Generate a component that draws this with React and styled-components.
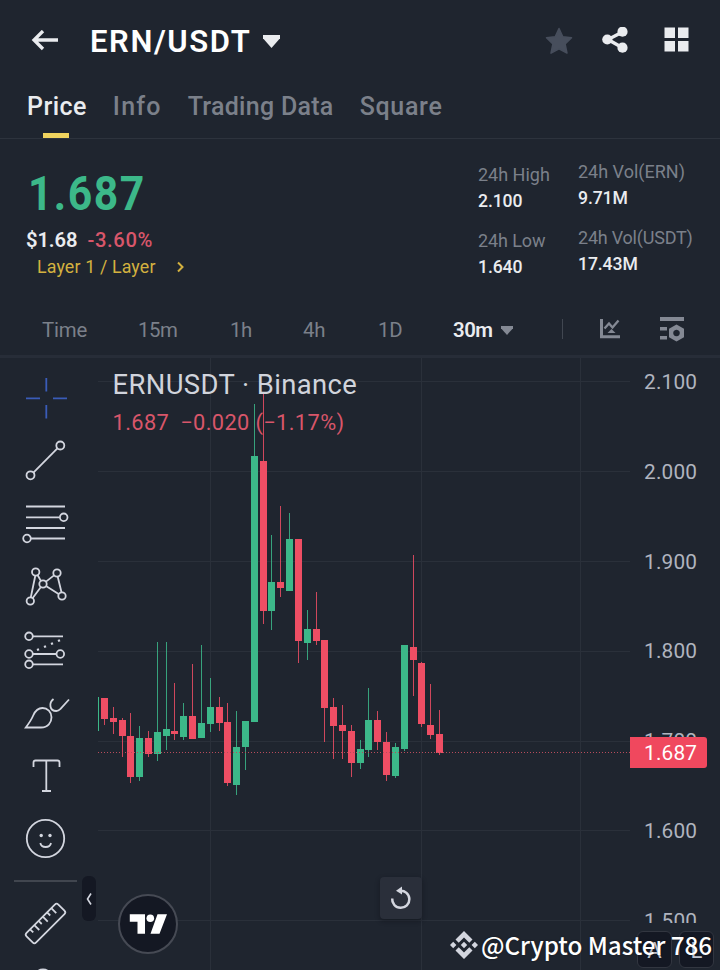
import React from "react";
import styled, { createGlobalStyle } from "styled-components";

const c = {
  bg: "#1f252f",
  line: "#2d333d",
  grid: "#2a303a",
  text: "#eaecef",
  muted: "#848994",
  dim: "#7b808a",
  green: "#3cb889",
  red: "#ee4e64",
  softRed: "#d8566a",
  yellow: "#f0d35e",
  gold: "#d3b13f",
  icon: "#d3d6df",
  dark: "#141823",
};

const Global = createGlobalStyle`
  body { margin: 0; background: ${c.bg}; }
  * { box-sizing: border-box; }
  svg { display: block; flex: none; }
`;

const Screen = styled.div`
  position: relative;
  width: 720px;
  height: 970px;
  overflow: hidden;
  display: flex;
  flex-direction: column;
  background: ${c.bg};
  color: ${c.text};
  font-family: Roboto, "Noto Sans", sans-serif;
  white-space: nowrap;
`;

const Header = styled.header`
  height: 82px;
  padding: 0 29px 0 31px;
  display: flex;
  align-items: center;
`;
const Title = styled.h1`
  margin: 0 12px 0 31px;
  padding-top: 2px;
  font-size: 31px;
  line-height: 40px;
  font-weight: 600;
  letter-spacing: 1.6px;
  color: #fff;
`;
const Actions = styled.div`
  margin-left: auto;
  display: flex;
  align-items: center;
  gap: 28px;
`;

const Tabs = styled.nav`
  height: 57px;
  padding-left: 27px;
  display: flex;
  gap: 26px;
  border-bottom: 1px solid ${c.line};
`;
const Tab = styled.a`
  display: flex;
  flex-direction: column;
  align-items: center;
  justify-content: space-between;
  padding-top: 9px;
  font-size: 25px;
  line-height: 32px;
  font-weight: 500;
  letter-spacing: ${(p) => p.$spacing}px;
  color: ${(p) => (p.$active ? c.text : c.dim)};
  &::after {
    content: "";
    width: 26px;
    height: 5px;
    margin-right: 2px;
    background: ${(p) => (p.$active ? c.yellow : "transparent")};
  }
`;

const Summary = styled.section`
  height: 164px;
  padding: 23px 0 0 27px;
  display: flex;
`;
const PriceBlock = styled.div`
  width: 451px;
`;
const LastPrice = styled.div`
  padding: 2px 0 0 1px;
  font-size: 48.5px;
  line-height: 60px;
  font-weight: 700;
  letter-spacing: 1.7px;
  transform: scaleX(0.88);
  transform-origin: left;
  color: ${c.green};
`;
const ChangeRow = styled.div`
  margin-top: 3px;
  display: flex;
  gap: 10px;
  font-size: 20.2px;
  line-height: 26px;
`;
const Fiat = styled.span`
  margin-left: -1px;
  font-weight: 600;
  letter-spacing: -0.1px;
`;
const Change = styled.span`
  font-weight: 500;
  letter-spacing: 0.65px;
  color: ${c.softRed};
`;
const Category = styled.a`
  margin-top: 1px;
  padding-left: 10px;
  display: flex;
  align-items: center;
  gap: 20px;
  font-size: 17.8px;
  line-height: 26px;
  letter-spacing: 0.15px;
  color: ${c.gold};
`;
const StatColumn = styled.div`
  width: 100px;
  margin-top: ${(p) => (p.$raised ? -3 : 0)}px;
`;
const Stat = styled.dl`
  margin: 0 0 14px;
  line-height: 26px;
`;
const StatName = styled.dt`
  font-size: 18px;
  letter-spacing: ${(p) => p.$spacing}px;
  color: ${c.dim};
`;
const StatValue = styled.dd`
  margin: 0;
  font-size: 17.6px;
  font-weight: 500;
  letter-spacing: -0.1px;
`;

const Intervals = styled.div`
  height: 52px;
  padding-left: 42px;
  display: grid;
  grid-template-columns: 96px 92px 73px 75px 75px 109px 38px 60px 30px;
  align-items: center;
`;
const Interval = styled.button`
  border: 0;
  padding: 2px 0 0;
  background: none;
  display: flex;
  align-items: center;
  gap: 8px;
  font: ${(p) => (p.$active ? 600 : 400)} 20.4px/28px Roboto, sans-serif;
  letter-spacing: ${(p) => p.$spacing}px;
  color: ${(p) => (p.$active ? c.text : c.dim)};
`;
const Rule = styled.span`
  width: 1px;
  height: 20px;
  background: #414751;
`;

const ChartArea = styled.main`
  position: relative;
  flex: 1;
  min-height: 0;
  overflow: hidden;
  display: grid;
  grid-template-columns: 97px 533px 90px;
  border-top: 3px solid #272d38;
`;
const Toolbar = styled.aside`
  padding-top: 8.5px;
`;
const Tool = styled.button`
  height: 63px;
  width: 97px;
  padding: 0 0 0 22px;
  border: 0;
  background: none;
  display: flex;
  align-items: center;
`;
const ToolDivider = styled.div`
  height: 2px;
  width: 63px;
  margin: 9px 0 10px 14px;
  background: #41464f;
`;
const Collapse = styled.button`
  position: absolute;
  left: 82px;
  top: 518px;
  width: 14px;
  height: 45px;
  padding: 0;
  border: 0;
  border-radius: 6px;
  background: ${c.dark};
  display: grid;
  place-items: center;
`;
const Legend = styled.div`
  position: absolute;
  left: 112.5px;
  top: 9px;
`;
const Symbol = styled.div`
  font-size: 27.4px;
  line-height: 36px;
  letter-spacing: 0.4px;
  color: #d1d4dc;
`;
const Quote = styled.div`
  margin-top: 3px;
  display: flex;
  gap: 11px;
  font-size: 21.8px;
  line-height: 34px;
  letter-spacing: 0.38px;
  color: ${c.softRed};
`;
const Axis = styled.div`
  height: 565px;
  overflow: hidden;
  padding: 12px 0 0 14px;
  display: flex;
  flex-direction: column;
  gap: 65.8px;
  font-size: 20.8px;
  letter-spacing: 0.2px;
  color: #b0b4bf;
`;
const AxisLabel = styled.span`
  flex: none;
  line-height: 24px;
`;
const PriceTag = styled.div`
  position: absolute;
  left: 630px;
  top: 379px;
  width: 77px;
  height: 31px;
  padding: 1px 0 0 14px;
  border-radius: 0 3px 3px 0;
  background: #f0485e;
  color: #fff;
  font-size: 20.8px;
  line-height: 31px;
  letter-spacing: 0.2px;
`;
const TradingView = styled.div`
  position: absolute;
  left: 118px;
  top: 536px;
  width: 60px;
  height: 60px;
  border: 2px solid #464a54;
  border-radius: 50%;
  background: ${c.dark};
  display: grid;
  place-items: center;
`;
const Reset = styled.button`
  position: absolute;
  left: 380px;
  top: 519px;
  width: 42px;
  height: 42px;
  padding: 0;
  border: 0;
  border-radius: 4px;
  background: #2a2f3a;
  box-shadow: 0 2px 5px rgba(10, 13, 20, 0.45);
  display: grid;
  place-items: center;
`;
const ScaleButtons = styled.div`
  position: absolute;
  left: 637px;
  top: 573px;
  display: flex;
  gap: 7px;
`;
const ScaleButton = styled.button`
  width: 35px;
  height: 37px;
  padding: 2px 0 0;
  border: 1px solid #323640;
  border-radius: 6px;
  background: ${c.dark};
  color: #c3c6d0;
  font: 400 22px/30px Roboto, sans-serif;
`;
const Watermark = styled.div`
  position: absolute;
  left: 450px;
  top: 926px;
  display: flex;
  align-items: center;
  gap: 3px;
  height: 37px;
  color: #fff;
  font: 500 24.2px/37px "Noto Sans CJK SC", sans-serif;
  letter-spacing: -0.02px;
  text-shadow: 0 0 2px rgba(0, 0, 0, 0.4);
`;

// left edge of body, direction, high, body top, body bottom, low
const candles = [
  [101, "r", 698, 698, 719, 725],
  [110, "r", 707, 718, 722, 734],
  [119, "r", 718, 720, 736, 757],
  [127, "r", 713, 736, 777, 783],
  [136, "g", 726, 738, 777, 781],
  [145, "r", 731, 738, 754, 757],
  [154, "g", 642, 732, 754, 761],
  [163, "g", 642, 729, 736, 750],
  [171, "r", 683, 731, 734, 740],
  [180, "g", 703, 716, 737, 740],
  [189, "r", 664, 716, 739, 739],
  [198, "g", 645, 723, 738, 738],
  [207, "g", 678, 707, 724, 732],
  [216, "r", 697, 707, 723, 731],
  [224, "r", 703, 722, 783, 786],
  [233, "g", 711, 747, 785, 795],
  [242, "g", 721, 721, 747, 770],
  [251, "g", 404, 456, 722, 722],
  [260, "r", 394, 461, 611, 624],
  [268, "g", 535, 582, 611, 630],
  [277, "r", 506, 582, 588, 597],
  [286, "g", 513, 539, 591, 591],
  [295, "r", 539, 539, 641, 663],
  [304, "g", 610, 629, 643, 660],
  [313, "r", 592, 629, 641, 645],
  [321, "r", 640, 640, 708, 742],
  [330, "r", 698, 707, 726, 759],
  [339, "r", 705, 725, 731, 759],
  [348, "r", 725, 731, 763, 777],
  [357, "g", 740, 749, 763, 769],
  [365, "g", 688, 720, 750, 757],
  [374, "r", 711, 720, 742, 750],
  [383, "r", 732, 742, 775, 781],
  [392, "g", 743, 747, 776, 778],
  [401, "g", 645, 645, 749, 751],
  [410, "r", 555, 647, 660, 696],
  [418, "r", 662, 663, 724, 727],
  [427, "r", 684, 725, 735, 739],
  [436, "r", 710, 734, 753, 755],
];

const Candles = () => (
  <svg width="533" height="612" viewBox="97 358 533 612" shapeRendering="crispEdges">
    {[381, 471, 561, 651, 741, 830, 920].map((y) => (
      <rect key={y} x="98" y={y} width="532" height="1" fill={c.grid} />
    ))}
    {[210, 421, 580].map((x) => (
      <rect key={x} x={x} y="358" width="1" height="612" fill={c.grid} />
    ))}
    <rect x="98" y="697" width="1" height="34" fill={c.green} />
    {candles.map(([x, dir, high, top, bottom, low]) => {
      const fill = dir === "g" ? c.green : c.red;
      return (
        <g key={x} fill={fill}>
          <rect x={x + 3} y={high} width="1" height={low - high} fillOpacity="0.85" />
          <rect x={x} y={top} width="7" height={bottom - top} />
        </g>
      );
    })}
    <path d="M98 752.5H630" stroke="#b84c5c" strokeDasharray="1 2" />
  </svg>
);

const toolIcons = {
  cross: <path d="M24.3 4v13.5M24.3 31v13.5M4 24.3h14M31 24.3h14" stroke="#3a5cb8" />,
  trend: (
    <>
      <path d="M35.4 11.4 11.4 35.6" />
      <circle cx="38.3" cy="8.5" r="4" />
      <circle cx="8.5" cy="38.3" r="4" />
    </>
  ),
  fib: (
    <>
      <path d="M4 6.5h39M4 17.3h33.5M4 28h39M9 38.5h34" />
      <circle cx="41.7" cy="17.3" r="3.8" />
      <circle cx="5" cy="38.5" r="3.8" />
    </>
  ),
  pattern: (
    <>
      <path d="M13.3 12.8 8.8 34.2M15.7 12.3 18.9 17.9M24 18.6 32 12.4M35.7 13.7 39.5 29.2M24.4 23.2 36.6 31M18.7 24.2 10.7 35" />
      <circle cx="13.7" cy="9" r="3.7" />
      <circle cx="35" cy="10" r="3.7" />
      <circle cx="21" cy="21" r="3.7" />
      <circle cx="40" cy="33" r="3.7" />
      <circle cx="8.3" cy="38" r="3.7" />
    </>
  ),
  forecast: (
    <>
      <path d="M11 10.3h30M11 28h23.5M11 38.3h30" />
      <circle cx="7" cy="10.3" r="3.8" />
      <circle cx="7" cy="28" r="3.8" />
      <circle cx="7" cy="38.3" r="3.8" />
      <circle cx="38.3" cy="28" r="3.8" />
      <path d="M15 24 38.5 14" strokeDasharray="2.2 5.4" strokeWidth="2.2" />
    </>
  ),
  brush: (
    <>
      <path d="M3.8 38.5H19c7 0 10.5-5 10.5-10.3S25.5 19 20.5 19C15 19 13 22.3 11.2 26.5 9.3 31 6.8 34.5 3.8 38.5z" />
      <path d="M31.5 10C26.5 14 27.5 22 34.3 22c1.7 0 3-1 4.2-2.2L47 10.5" />
    </>
  ),
  text: <path d="M11.5 15V10.5q0-2 2-2h22q2 0 2 2V15M24.3 8.5V39M20 39h9" />,
  smile: (
    <>
      <circle cx="23.5" cy="23.5" r="18.7" />
      <path d="M18.3 28c1 5.3 9.700 5.300 10.700 0" />
      <circle cx="19.2" cy="20.5" r="1.7" fill={c.icon} stroke="none" />
      <circle cx="28" cy="20.5" r="1.7" fill={c.icon} stroke="none" />
    </>
  ),
  ruler: (
    <g transform="translate(23.5 24.5) rotate(-45)">
      <rect x="-22.5" y="-6.8" width="45" height="13.6" rx="2.5" />
      <path d="M-15-6.8v4.5M-9-6.8v7M-3-6.8v4.5M3-6.8v7M9-6.8v4.5M15-6.8v7" />
    </g>
  ),
  lens: <circle cx="21" cy="16.5" r="9" />,
};

const ToolButton = ({ name }) => (
  <Tool aria-label={name}>
    <svg width="48" height="48" fill="none" stroke={c.icon} strokeWidth="1.8" overflow="visible">
      {toolIcons[name]}
    </svg>
  </Tool>
);

const Caret = ({ w, h, fill }) => (
  <svg width={w} height={h} viewBox="0 0 16 13" preserveAspectRatio="none">
    <path d="M0 0h16v3.2L8 13 0 3.2z" fill={fill} />
  </svg>
);

const StatItem = ({ name, value, spacing }) => (
  <Stat>
    <StatName $spacing={spacing}>{name}</StatName>
    <StatValue>{value}</StatValue>
  </Stat>
);

const intervals = [
  ["Time", -0.15],
  ["15m", -0.4],
  ["1h", -0.4],
  ["4h", -0.2],
  ["1D", -0.2],
];

export default function App() {
  return (
    <Screen>
      <Global />
      <Header>
        <svg width="28" height="22" viewBox="0 0 28 22" fill="none" stroke={c.text} strokeWidth="3.3">
          <path d="M2.5 10H27M12 1l-9 9 9 9" />
        </svg>
        <Title>ERN/USDT</Title>
        <Caret w={17} h={13} fill={c.text} />
        <Actions>
          <svg width="28" height="28" viewBox="0 0 28 28">
            <path
              d="M14 1.5l3.8 8.3 8.7 1-6.4 6.2 1.9 9.1L14 21.8l-8 4.3L7.9 17 1.5 10.8l8.7-1z"
              fill="#474e5c"
              stroke="#474e5c"
              strokeWidth="1.5"
              strokeLinejoin="round"
            />
          </svg>
          <svg width="28" height="28" viewBox="0 0 28 28" fill={c.text}>
            <path d="M21.5 5 7 12.5l14.5 8.2" fill="none" stroke={c.text} strokeWidth="3.4" />
            <circle cx="21.5" cy="4.7" r="5.1" />
            <circle cx="6.3" cy="12.5" r="5.1" />
            <circle cx="21.5" cy="20.7" r="5.1" />
          </svg>
          <svg width="34" height="28" viewBox="0 0 34 28" fill={c.text}>
            <path d="M7.5.5H18V11H7.500zM21 .5h10.500V11H21zM7.500 14H18v10.500H7.500zM21 14h10.500v10.500H21z" />
          </svg>
        </Actions>
      </Header>
      <Tabs>
        <Tab $active $spacing={0.45}>Price</Tab>
        <Tab $spacing={1.2}>Info</Tab>
        <Tab $spacing={0.28}>Trading Data</Tab>
        <Tab $spacing={0.7}>Square</Tab>
      </Tabs>
      <Summary>
        <PriceBlock>
          <LastPrice>1.687</LastPrice>
          <ChangeRow>
            <Fiat>$1.68</Fiat>
            <Change>-3.60%</Change>
          </ChangeRow>
          <Category>
            Layer 1 / Layer
            <svg width="9" height="12" viewBox="0 0 9 12" fill="none" stroke={c.gold} strokeWidth="2">
              <path d="M2 1.5 6.5 6 2 10.5" />
            </svg>
          </Category>
        </PriceBlock>
        <StatColumn>
          <StatItem name="24h High" value="2.100" spacing={0} />
          <StatItem name="24h Low" value="1.640" spacing={-0.1} />
        </StatColumn>
        <StatColumn $raised>
          <StatItem name="24h Vol(ERN)" value="9.71M" spacing={0} />
          <StatItem name="24h Vol(USDT)" value="17.43M" spacing={-0.22} />
        </StatColumn>
      </Summary>
      <Intervals>
        {intervals.map(([label, spacing]) => (
          <Interval key={label} $spacing={spacing}>
            {label}
          </Interval>
        ))}
        <Interval $active $spacing={-0.5}>
          30m
          <Caret w={12} h={9} fill={c.muted} />
        </Interval>
        <Rule />
        <svg width="20" height="20" viewBox="0 0 20 20" fill="none" stroke={c.muted}>
          <path d="M1.5 0v17.7H20" strokeWidth="3" />
          <path d="M4.5 9.5 9 4.5l3.5 4L18.5 1.5" strokeWidth="2.3" />
          <path d="M7.5 14h8l-4-4z" fill={c.muted} stroke="none" />
        </svg>
        <svg width="25" height="26" viewBox="0 0 25 26" fill={c.muted}>
          <path d="M0 1h24v4H0zM0 11h7v3.5H0zM0 20h7v3.5H0z" />
          <path
            fillRule="evenodd"
            d="M16.5 8.5 24 12.7v8.6l-7.5 4.2L9 21.300v-8.600zM16.500 13.700a3.300 3.300 0 1 0 .01 0z"
          />
        </svg>
      </Intervals>
      <ChartArea>
        <Toolbar>
          {["cross", "trend", "fib", "pattern", "forecast", "brush", "text", "smile"].map((n) => (
            <ToolButton key={n} name={n} />
          ))}
          <ToolDivider />
          <ToolButton name="ruler" />
          <ToolButton name="lens" />
        </Toolbar>
        <Candles />
        <Axis>
          {["2.100", "2.000", "1.900", "1.800", "1.700", "1.600", "1.500"].map((v) => (
            <AxisLabel key={v}>{v}</AxisLabel>
          ))}
        </Axis>
        <Legend>
          <Symbol>ERNUSDT · Binance</Symbol>
          <Quote>
            <span>1.687</span>
            <span>−0.020 (−1.17%)</span>
          </Quote>
        </Legend>
        <PriceTag>1.687</PriceTag>
        <Collapse aria-label="Collapse">
          <svg width="6" height="14" viewBox="0 0 6 14" fill="none" stroke={c.icon} strokeWidth="1.6">
            <path d="M5 1.5 1.5 7 5 12.5" />
          </svg>
        </Collapse>
        <TradingView>
          <svg width="38" height="20" viewBox="0 0 38 20" fill="#fff">
            <path d="M.8.3H16v19.5H8.5V7.7H.8zM28.5.3H38l-7.5 19.5h-9z" />
            <circle cx="21.3" cy="4.2" r="3.8" />
          </svg>
        </TradingView>
        <Reset aria-label="Reset chart">
          <svg width="24" height="24" viewBox="0 0 24 24" fill="none">
            <path d="M3.2 12.5A8.6 8.6 0 1 0 11 4.700" stroke={c.icon} strokeWidth="2.5" />
            <path d="M7 4.8 13 .5v8z" fill={c.icon} />
          </svg>
        </Reset>
        <ScaleButtons>
          <ScaleButton>A</ScaleButton>
          <ScaleButton>L</ScaleButton>
        </ScaleButtons>
      </ChartArea>
      <Watermark>
        <svg width="28" height="28" viewBox="0 0 28 28" fill={c.icon}>
          <path d="M14 0l8.5 8.5-3.2 3.2L14 6.4l-5.3 5.3-3.2-3.2zM14 28l8.5-8.5-3.2-3.2L14 21.6l-5.3-5.3-3.2 3.2zM3.2 10.8 6.4 14l-3.2 3.2L0 14zM24.8 10.8 28 14l-3.2 3.2-3.2-3.2zM14 10.8l3.2 3.2-3.2 3.2-3.2-3.2z" />
        </svg>
        @Crypto Master 786
      </Watermark>
    </Screen>
  );
}
